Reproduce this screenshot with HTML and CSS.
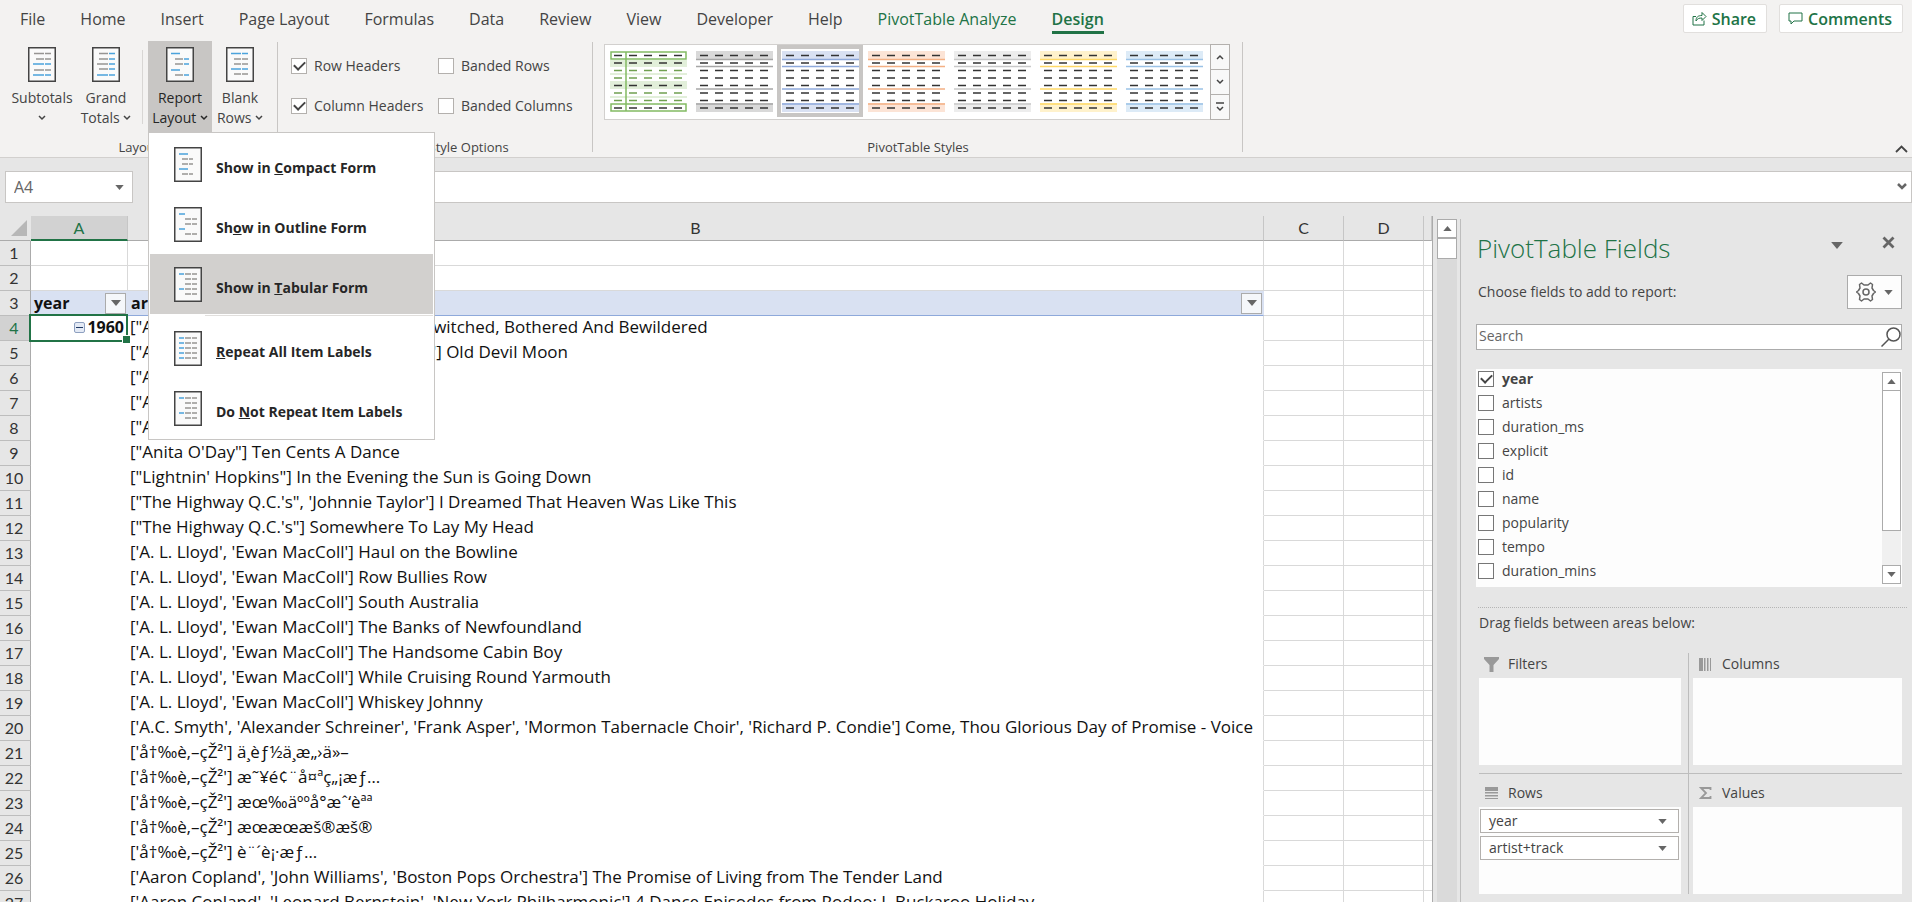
FILE: index.html
```html
<!DOCTYPE html>
<html lang="en">
<head>
  <meta charset="UTF-8">
  <meta name="viewport" content="width=device-width, initial-scale=1.0">
  <title>Excel - PivotTable Design</title>
  <link rel="stylesheet" href="styles.css">
</head>
<body>
  <!-- shared shapes -->
  <svg class="defs" width="0" height="0" aria-hidden="true">
    <symbol id="caret" viewBox="0 0 8 6"><path d="M1 1l3 3 3-3" fill="none" stroke="currentColor" stroke-width="1.5"/></symbol>
    <symbol id="down" viewBox="0 0 10 6"><path d="M0 0h10l-5 6z" fill="currentColor"/></symbol>
    <symbol id="up" viewBox="0 0 10 6"><path d="M0 6h10l-5-6z" fill="currentColor"/></symbol>
    <symbol id="style" viewBox="0 0 77 61">
      <path class="tint" d="M0 0h77v9H0zM0 52h77v9H0z"/>
      <path class="rule" d="M0 8.500h77M0 15.500h77M0 38h77M0 53h77"/>
      <path class="dash" d="M4 4.500h70M4 12h70M4 19.500h70M4 27h70M4 34.500h70M4 42h70M4 49.500h70M4 57h70"/>
    </symbol>
  </svg>

  <header class="ribbon">
    <nav class="tabs">
      <a href="#">File</a>
      <a href="#">Home</a>
      <a href="#">Insert</a>
      <a href="#">Page Layout</a>
      <a href="#">Formulas</a>
      <a href="#">Data</a>
      <a href="#">Review</a>
      <a href="#">View</a>
      <a href="#">Developer</a>
      <a href="#">Help</a>
      <a href="#" class="green">PivotTable Analyze</a>
      <a href="#" class="green active">Design</a>
      <div class="actions">
        <button type="button">
          <svg width="15" height="15" viewBox="0 0 15 15" fill="none" stroke="currentColor"><path d="M4 5.500H1v8.500h11V9.500M4 10c0-4 2-5.500 6-5.500V1.500l4 4-4 4v-2.500c-3 0-4.500.5-6 3z"/></svg>
          Share
        </button>
        <button type="button">
          <svg width="15" height="15" viewBox="0 0 15 15" fill="none" stroke="currentColor"><path d="M1 2h13v8H6l-3 3v-3H1z"/></svg>
          Comments
        </button>
      </div>
    </nav>

    <div class="groups">
      <section class="group layout">
        <div class="body">
          <button type="button" class="big subtotals">
            <svg class="sheet" viewBox="0 0 28 35"><rect x=".75" y=".75" width="26.500" height="33.500"/><path class="g" d="M6 6.500h10M17 6.500h6M8 12h8M17 12h6M6 23h10M17 23h6"/><path class="b" d="M5 17h11M17 17h6M5 28h11M17 28h6"/></svg>
            <span>Subtotals</span>
            <span><svg class="caret"><use href="#caret"/></svg></span>
          </button>
          <button type="button" class="big grand">
            <svg class="sheet" viewBox="0 0 28 35"><rect x=".75" y=".75" width="26.500" height="33.500"/><path class="g" d="M7 6.500h9M7 12h9M5 17h11M7 22h9"/><path class="b" d="M17 6.500h6M17 12h6M17 17h6M17 22h6M5 28h11M17 28h6"/></svg>
            <span>Grand</span>
            <span>Totals <svg class="caret"><use href="#caret"/></svg></span>
          </button>
          <i class="line"></i>
          <div class="dropdown">
            <button type="button" class="big report open">
              <svg class="sheet" viewBox="0 0 28 35"><rect x=".75" y=".75" width="26.500" height="33.500"/><path class="g" d="M9 12h8M9 17h8M9 28h8"/><path class="b" d="M5 6.500h9M18 12h5M18 17h5M5 23h9M18 28h5"/></svg>
              <span>Report</span>
              <span>Layout <svg class="caret"><use href="#caret"/></svg></span>
            </button>
            <div class="menu">
              <button type="button">
                <svg class="sheet" viewBox="0 0 28 35"><rect x=".75" y=".75" width="26.500" height="33.500"/><path class="g" d="M8 12h6M15 12h4M8 17h6M15 17h4M8 27h6M15 27h4"/><path class="b" d="M5 7h9M5 22h9"/></svg>
                <span>Show in <u>C</u>ompact Form</span>
              </button>
              <button type="button">
                <svg class="sheet" viewBox="0 0 28 35"><rect x=".75" y=".75" width="26.500" height="33.500"/><path class="g" d="M11 12h6M18 12h5M11 17h6M18 17h5M11 27h6M18 27h5"/><path class="b" d="M5 7h6M5 22h6"/></svg>
                <span>Sh<u>o</u>w in Outline Form</span>
              </button>
              <button type="button" class="hover">
                <svg class="sheet" viewBox="0 0 28 35"><rect x=".75" y=".75" width="26.500" height="33.500"/><path class="g" d="M11 7h6M18 7h5M11 12h6M18 12h5M11 17h6M18 17h5M11 22h6M18 22h5M11 27h6M18 27h5"/><path class="b" d="M5 7h5M5 22h5"/></svg>
                <span>Show in <u>T</u>abular Form</span>
              </button>
              <hr>
              <button type="button">
                <svg class="sheet" viewBox="0 0 28 35"><rect x=".75" y=".75" width="26.500" height="33.500"/><path class="g" d="M11 7h6M18 7h5M11 12h6M18 12h5M11 17h6M18 17h5M11 22h6M18 22h5M11 27h6M18 27h5"/><path class="b" d="M5 7h5M5 12h5M5 17h5M5 22h5M5 27h5"/></svg>
                <span><u>R</u>epeat All Item Labels</span>
              </button>
              <button type="button">
                <svg class="sheet" viewBox="0 0 28 35"><rect x=".75" y=".75" width="26.500" height="33.500"/><path class="g" d="M11 7h6M18 7h5M11 12h6M18 12h5M11 17h6M18 17h5M11 22h6M18 22h5M11 27h6M18 27h5"/><path class="b" d="M5 7h5M5 22h5"/></svg>
                <span>Do <u>N</u>ot Repeat Item Labels</span>
              </button>
            </div>
          </div>
          <button type="button" class="big blank">
            <svg class="sheet" viewBox="0 0 28 35"><rect x=".75" y=".75" width="26.500" height="33.500"/><path class="g" d="M8 12h7M16 12h6M8 17h7M16 17h6M8 27h7M16 27h6"/><path class="b" d="M5 6.500h10M16 6.500h6M5 22h10M16 22h6"/></svg>
            <span>Blank</span>
            <span>Rows <svg class="caret"><use href="#caret"/></svg></span>
          </button>
        </div>
        <h2>Layout</h2>
      </section>

      <section class="group options">
        <div class="body checks">
          <label><input type="checkbox" checked> Row Headers</label>
          <label><input type="checkbox"> Banded Rows</label>
          <label><input type="checkbox" checked> Column Headers</label>
          <label><input type="checkbox"> Banded Columns</label>
        </div>
        <h2>PivotTable Style Options</h2>
      </section>

      <section class="group styles">
        <div class="body">
          <div class="gallery">
            <button type="button" aria-label="Light green">
              <svg width="77" height="61" viewBox="0 0 77 61">
                <path fill="#e2efda" d="M0 9h77v7H0zM0 30h77v8H0zM0 22h77v2H0zM0 45h77v2H0z"/>
                <path fill="none" stroke="#83bb63" stroke-width="1.500" d="M1 1h75v7H1zM1 53h75v7H1zM16 1v59"/>
                <path class="dash" d="M4 4.500h70M4 12h70M4 34.500h70M4 57h70"/>
                <path class="dash leaf" d="M4 19.500h70M4 27h70M4 42h70M4 49.500h70"/>
              </svg>
            </button>
            <button type="button" class="gray" aria-label="Light gray"><svg width="77" height="61"><use href="#style"/></svg></button>
            <button type="button" class="blue selected" aria-label="Light blue"><svg width="77" height="61"><use href="#style"/></svg></button>
            <button type="button" class="orange" aria-label="Light orange"><svg width="77" height="61"><use href="#style"/></svg></button>
            <button type="button" class="silver" aria-label="Light silver"><svg width="77" height="61"><use href="#style"/></svg></button>
            <button type="button" class="gold" aria-label="Light gold"><svg width="77" height="61"><use href="#style"/></svg></button>
            <button type="button" class="sky" aria-label="Light sky"><svg width="77" height="61"><use href="#style"/></svg></button>
            <div class="scroll">
              <button type="button" aria-label="Previous styles"><svg class="caret flip"><use href="#caret"/></svg></button>
              <button type="button" aria-label="Next styles"><svg class="caret"><use href="#caret"/></svg></button>
              <button type="button" aria-label="More styles"><svg width="8" height="10" viewBox="0 0 8 10"><path d="M0 1h8M1 5l3 3 3-3" fill="none" stroke="currentColor" stroke-width="1.500"/></svg></button>
            </div>
          </div>
        </div>
        <h2>PivotTable Styles</h2>
      </section>

      <button type="button" class="collapse" aria-label="Collapse ribbon"><svg width="13" height="8" viewBox="0 0 13 8"><path d="M1 7l5.500-5.500L12 7" fill="none" stroke="currentColor" stroke-width="1.800"/></svg></button>
    </div>
  </header>

  <div class="formula">
    <div class="namebox">
      <input type="text" value="A4" aria-label="Name box">
      <svg width="9" height="5"><use href="#down"/></svg>
    </div>
    <div class="fx">
      <input type="text" aria-label="Formula bar">
      <svg width="10" height="8" viewBox="0 0 10 8"><path d="M1 1l4 4 4-4" fill="none" stroke="currentColor" stroke-width="2.500"/></svg>
    </div>
  </div>

  <main>
    <div class="grid">
      <table>
        <colgroup><col class="c-num"><col class="c-a"><col><col class="c-c"><col class="c-c"><col class="c-e"></colgroup>
        <thead>
          <tr><th><svg width="16" height="16" viewBox="0 0 16 16"><path d="M16 0v16H0z" fill="#b7b7b7"/></svg></th><th class="on">A</th><th>B</th><th>C</th><th>D</th><th></th></tr>
        </thead>
        <tbody>
          <tr class="lined"><th>1</th><td></td><td></td><td></td><td></td><td></td></tr>
          <tr class="lined"><th>2</th><td></td><td></td><td></td><td></td><td></td></tr>
          <tr class="head"><th>3</th>
            <td><div class="field">year <button type="button" aria-label="Filter year"><svg width="10" height="6"><use href="#down"/></svg></button></div></td>
            <td><div class="field">artist+track <button type="button" aria-label="Filter artist+track"><svg width="10" height="6"><use href="#down"/></svg></button></div></td>
            <td></td><td></td><td></td></tr>
          <tr><th class="on">4</th><td class="cursor"><button type="button" class="minus" aria-label="Collapse 1960"></button>1960</td><td>["Anita O'Day", 'Billy May Big Band'] Bewitched, Bothered And Bewildered</td><td></td><td></td><td></td></tr>
          <tr><th>5</th><td></td><td>["Anita O'Day", 'The Three Sounds Trio'] Old Devil Moon</td><td></td><td></td><td></td></tr>
          <tr><th>6</th><td></td><td>["Anita O'Day"] Angel Eyes</td><td></td><td></td><td></td></tr>
          <tr><th>7</th><td></td><td>["Anita O'Day"] I Can't Get Started</td><td></td><td></td><td></td></tr>
          <tr><th>8</th><td></td><td>["Anita O'Day"] Johnny One Note</td><td></td><td></td><td></td></tr>
          <tr><th>9</th><td></td><td>["Anita O'Day"] Ten Cents A Dance</td><td></td><td></td><td></td></tr>
          <tr><th>10</th><td></td><td>["Lightnin' Hopkins"] In the Evening the Sun is Going Down</td><td></td><td></td><td></td></tr>
          <tr><th>11</th><td></td><td>["The Highway Q.C.'s", 'Johnnie Taylor'] I Dreamed That Heaven Was Like This</td><td></td><td></td><td></td></tr>
          <tr><th>12</th><td></td><td>["The Highway Q.C.'s"] Somewhere To Lay My Head</td><td></td><td></td><td></td></tr>
          <tr><th>13</th><td></td><td>['A. L. Lloyd', 'Ewan MacColl'] Haul on the Bowline</td><td></td><td></td><td></td></tr>
          <tr><th>14</th><td></td><td>['A. L. Lloyd', 'Ewan MacColl'] Row Bullies Row</td><td></td><td></td><td></td></tr>
          <tr><th>15</th><td></td><td>['A. L. Lloyd', 'Ewan MacColl'] South Australia</td><td></td><td></td><td></td></tr>
          <tr><th>16</th><td></td><td>['A. L. Lloyd', 'Ewan MacColl'] The Banks of Newfoundland</td><td></td><td></td><td></td></tr>
          <tr><th>17</th><td></td><td>['A. L. Lloyd', 'Ewan MacColl'] The Handsome Cabin Boy</td><td></td><td></td><td></td></tr>
          <tr><th>18</th><td></td><td>['A. L. Lloyd', 'Ewan MacColl'] While Cruising Round Yarmouth</td><td></td><td></td><td></td></tr>
          <tr><th>19</th><td></td><td>['A. L. Lloyd', 'Ewan MacColl'] Whiskey Johnny</td><td></td><td></td><td></td></tr>
          <tr><th>20</th><td></td><td>['A.C. Smyth', 'Alexander Schreiner', 'Frank Asper', 'Mormon Tabernacle Choir', 'Richard P. Condie'] Come, Thou Glorious Day of Promise - Voice</td><td></td><td></td><td></td></tr>
          <tr><th>21</th><td></td><td>['å†‰è‚–çŽ²'] ä¸èƒ½ä¸æ„›ä»–</td><td></td><td></td><td></td></tr>
          <tr><th>22</th><td></td><td>['å†‰è‚–çŽ²'] æ˜¥é¢¨å¤ªç„¡æƒ…</td><td></td><td></td><td></td></tr>
          <tr><th>23</th><td></td><td>['å†‰è‚–çŽ²'] æœ‰äººå°æˆ‘èªª</td><td></td><td></td><td></td></tr>
          <tr><th>24</th><td></td><td>['å†‰è‚–çŽ²'] æœæœæš®æš®</td><td></td><td></td><td></td></tr>
          <tr><th>25</th><td></td><td>['å†‰è‚–çŽ²'] è¨´è¡·æƒ…</td><td></td><td></td><td></td></tr>
          <tr><th>26</th><td></td><td>['Aaron Copland', 'John Williams', 'Boston Pops Orchestra'] The Promise of Living from The Tender Land</td><td></td><td></td><td></td></tr>
          <tr><th>27</th><td></td><td>['Aaron Copland', 'Leonard Bernstein', 'New York Philharmonic'] 4 Dance Episodes from Rodeo: I. Buckaroo Holiday</td><td></td><td></td><td></td></tr>
        </tbody>
      </table>
    </div>

    <div class="vbar">
      <button type="button" aria-label="Scroll up"><svg width="9" height="5"><use href="#up"/></svg></button>
      <div class="thumb"></div>
    </div>

    <aside class="pane">
      <div class="title">
        <h1>PivotTable Fields</h1>
        <button type="button" aria-label="Pane options"><svg width="12" height="7"><use href="#down"/></svg></button>
        <button type="button" aria-label="Close pane"><svg width="13" height="13" viewBox="0 0 13 13"><path d="M1.500 1.500l10 10M11.500 1.500l-10 10" stroke="currentColor" stroke-width="2.800"/></svg></button>
      </div>
      <div class="choose">
        <p>Choose fields to add to report:</p>
        <button type="button" class="gear" aria-label="Tools">
          <svg width="20" height="20" viewBox="0 0 20 20" fill="none" stroke="currentColor" stroke-width="1.500" stroke-linejoin="round"><circle cx="10" cy="10" r="3"/><path d="M5.500 1l2.500 2h4l2.500-2 2 1.500-.5 3.500 1.500 2.500 2 1.500-2 1.500-1.500 2.500.5 3.500-2 1.500-2.500-2H8l-2.500 2-2-1.500.5-3.500-1.500-2.500-2-1.500 2-1.500L4 6l-.5-3.500z"/></svg>
          <svg width="9" height="5"><use href="#down"/></svg>
        </button>
      </div>
      <div class="search">
        <input type="text" placeholder="Search" aria-label="Search">
        <svg width="20" height="20" viewBox="0 0 20 20" fill="none" stroke="#555" stroke-width="1.500"><circle cx="12.500" cy="7.500" r="6.500"/><path d="M8 12l-7.500 7.500"/></svg>
      </div>
      <div class="fields">
        <div class="list">
          <label class="checked"><input type="checkbox" checked> year</label>
          <label><input type="checkbox"> artists</label>
          <label><input type="checkbox"> duration_ms</label>
          <label><input type="checkbox"> explicit</label>
          <label><input type="checkbox"> id</label>
          <label><input type="checkbox"> name</label>
          <label><input type="checkbox"> popularity</label>
          <label><input type="checkbox"> tempo</label>
          <label><input type="checkbox"> duration_mins</label>
          <label><input type="checkbox" aria-label="More fields"></label>
        </div>
        <div class="fieldbar">
          <button type="button" aria-label="Scroll fields up"><svg width="9" height="5"><use href="#up"/></svg></button>
          <div class="thumb"></div>
          <button type="button" aria-label="Scroll fields down"><svg width="9" height="5"><use href="#down"/></svg></button>
        </div>
      </div>
      <p class="drag">Drag fields between areas below:</p>
      <div class="areas">
        <section>
          <h3><svg width="15" height="15" viewBox="0 0 15 15"><path d="M0 0h15v2L9.500 8v7h-4V8L0 2z" fill="#999"/></svg>Filters</h3>
          <div class="box"></div>
        </section>
        <section>
          <h3><svg width="15" height="15" viewBox="0 0 15 15"><path d="M1 1h4v13H1zM6 1h1.500v13H6zM9 1h1.500v13H9zM12 1h1v13h-1z" fill="#999"/></svg>Columns</h3>
          <div class="box"></div>
        </section>
        <section>
          <h3><svg width="15" height="15" viewBox="0 0 15 15"><path d="M1 1h13v4H1zM1 6h13v1.500H1zM1 9h13v1.500H1zM1 12h13v1H1z" fill="#999"/></svg>Rows</h3>
          <div class="box">
            <button type="button">year <svg width="9" height="5"><use href="#down"/></svg></button>
            <button type="button">artist+track <svg width="9" height="5"><use href="#down"/></svg></button>
          </div>
        </section>
        <section>
          <h3><svg width="15" height="15" viewBox="0 0 15 15"><path d="M12.500 4V2H3l5 5-5 5h9.500v-2" fill="none" stroke="#999" stroke-width="1.800"/></svg>Values</h3>
          <div class="box"></div>
        </section>
      </div>
    </aside>
  </main>
</body>
</html>
```

FILE: styles.css
```css
* {
  box-sizing: border-box;
}

body {
  margin: 0;
  height: 100vh;
  display: flex;
  flex-direction: column;
  overflow: hidden;
  background-color: #e6e6e6;
  font-family: "Open Sans", "Noto Sans", sans-serif;
  font-size: 14px;
  line-height: 20px;
  color: #444;
}

button, input {
  font: inherit;
  color: inherit;
}

button {
  border: none;
  padding: 0;
  background: none;
  cursor: pointer;
}

h1, h2, h3, p {
  margin: 0;
  font-weight: 400;
}

svg {
  flex: none;
}

.defs {
  position: absolute;
}

/* ribbon */
.ribbon {
  background-color: #f3f2f1;
  border-bottom: 1px solid #d2d0ce;
}

.tabs {
  display: flex;
  align-items: flex-start;
  gap: 35px;
  height: 41px;
  padding: 4px 9px 0 20px;
  font-size: 16px;
}

.tabs a {
  height: 30px;
  color: #444;
  text-decoration: none;
  line-height: 30px;
  white-space: nowrap;
}

.tabs a.green {
  color: #217346;
}

.tabs a.active {
  font-weight: 600;
  border-bottom: 3px solid #217346;
}

.actions {
  display: flex;
  gap: 12px;
  margin-left: auto;
}

.actions button {
  display: flex;
  align-items: center;
  gap: 5px;
  height: 29px;
  padding: 0 10px 0 8px;
  background-color: #fff;
  border: 1px solid #e1dfdd;
  border-radius: 2px;
  color: #217346;
  font-weight: 600;
}

.groups {
  display: flex;
  height: 116px;
}

.group {
  display: flex;
  flex-direction: column;
  position: relative;
}

.group::after {
  content: "";
  position: absolute;
  right: 0;
  top: 1px;
  bottom: 5px;
  border-right: 1px solid #c8c6c4;
}

.group .body {
  display: flex;
  height: 91px;
}

.group h2 {
  font-size: 13px;
  line-height: 18px;
  padding-top: 6px;
  text-align: center;
}

.layout {
  width: 278px;
}

.layout .body {
  padding-left: 8px;
}

.options {
  width: 315px;
}

.styles {
  width: 650px;
}

.big {
  display: flex;
  flex-direction: column;
  align-items: center;
  height: 91px;
  padding-top: 6px;
  white-space: nowrap;
}

.big .sheet {
  margin-bottom: 6px;
}

.subtotals {
  width: 68px;
}

.grand {
  width: 60px;
}

.report {
  width: 64px;
}

.blank {
  width: 56px;
}

.big.open {
  background-color: #c8c6c4;
  color: #262626;
}

.line {
  width: 1px;
  height: 74px;
  margin: 9px 5px 0 6px;
  background-color: #d8d6d4;
}

.caret {
  width: 8px;
  height: 6px;
  vertical-align: 2px;
}

.flip {
  transform: rotate(180deg);
}

.sheet {
  width: 28px;
  height: 35px;
  fill: none;
  stroke-width: 1.5;
}

.sheet rect {
  fill: #fafafa;
  stroke: #444;
}

.sheet .g {
  stroke: #979593;
}

.sheet .b {
  stroke: #4ba3dc;
}

.dropdown {
  position: relative;
}

.menu {
  position: absolute;
  z-index: 5;
  top: 91px;
  left: 0;
  width: 287px;
  padding: 1px;
  background-color: #fff;
  border: 1px solid #c8c6c4;
}

.menu button {
  display: flex;
  align-items: center;
  gap: 14px;
  width: 100%;
  height: 60px;
  padding-left: 24px;
  color: #262626;
  font-weight: 700;
  white-space: nowrap;
}

.menu button span {
  padding-top: 8px;
}

.menu .hover {
  background-color: #d2d0ce;
}

.menu hr {
  margin: 1px 0 2px 55px;
  border: none;
  border-top: 1px solid #e1dfdd;
}

.group .checks {
  display: grid;
  grid-template-columns: 147px 1fr;
  grid-auto-rows: 40px;
  padding: 5px 0 0 13px;
}

.checks label {
  display: flex;
  align-items: center;
  gap: 7px;
  white-space: nowrap;
}

input[type="checkbox"] {
  appearance: none;
  flex: none;
  display: grid;
  place-items: center;
  width: 16px;
  height: 16px;
  margin: 0;
  background-color: #fff;
  border: 1px solid #b3b0ad;
}

input[type="checkbox"]:checked::after {
  content: "";
  width: 9px;
  height: 5px;
  margin-bottom: 3px;
  border: solid #444;
  border-width: 0 0 2px 2px;
  transform: rotate(-45deg);
}

.gallery {
  display: flex;
  height: 76px;
  margin: 3px 0 0 11px;
  background-color: #fff;
  border: 1px solid #d2d0ce;
}

.gallery > button {
  display: flex;
  align-items: center;
  justify-content: center;
  width: 86px;
  height: 72px;
  border: 4px solid #fff;
}

.gallery > .selected {
  border-color: #c8c6c4;
}

.tint {
  fill: var(--tint);
}

.rule {
  stroke: var(--rule);
  stroke-width: 1.5;
}

.dash {
  stroke: #333;
  stroke-width: 1.5;
  stroke-dasharray: 8 7;
}

.dash.leaf {
  stroke: #70a050;
}

.gray { --tint: #d9d9d9; --rule: #a6a6a6; }
.blue { --tint: #d9e1f2; --rule: #8ea9db; }
.orange { --tint: #fce4d6; --rule: #f4b084; }
.silver { --tint: #ededed; --rule: #c9c9c9; }
.gold { --tint: #fff2cc; --rule: #ffd966; }
.sky { --tint: #ddebf7; --rule: #9bc2e6; }

.scroll {
  display: flex;
  flex-direction: column;
  width: 20px;
  margin: -1px -1px -1px 3px;
}

.scroll button {
  display: flex;
  align-items: center;
  justify-content: center;
  flex: 1;
  border: 1px solid #b3b0ad;
  background-color: #f8f8f8;
}

.scroll button + button {
  border-top: none;
}

.collapse {
  margin: auto 4px 4px auto;
  line-height: 8px;
}

/* name box and formula bar */
.formula {
  display: flex;
  gap: 60px;
  padding: 13px 0 13px 5px;
}

.namebox, .fx {
  display: flex;
  align-items: center;
  height: 32px;
  background-color: #fff;
  border: 1px solid #c8c6c4;
  color: #666;
}

.namebox {
  width: 128px;
  padding: 0 8px;
  font-size: 16px;
}

.fx {
  flex: 1;
  padding: 0 4px;
}

.formula input {
  flex: 1;
  min-width: 0;
  padding: 0;
  border: none;
  outline: none;
  background: none;
}

main {
  flex: 1;
  min-height: 0;
  display: flex;
}

/* worksheet */
.grid {
  flex: 1;
  min-width: 0;
  overflow: hidden;
  background-color: #fff;
  border-right: 1px solid #ababab;
}

table {
  width: 100%;
  table-layout: fixed;
  border-collapse: separate;
  border-spacing: 0;
  font-size: 17px;
  line-height: 22px;
  color: #111;
}

.c-num { width: 31px; }
.c-a { width: 97px; }
.c-c { width: 80px; }
.c-e { width: 8px; }

tr {
  height: 25px;
}

th {
  padding: 0 0 1px;
  font-family: Lato, sans-serif;
  font-size: 16px;
  font-weight: 400;
  color: #333;
  background-color: #e6e6e6;
  border-right: 1px solid #ababab;
  border-bottom: 1px solid #bdbdbd;
}

thead th {
  border-bottom-color: #ababab;
  border-right-color: #c6c6c6;
}

thead th:first-child {
  border-right-color: #e6e6e6;
  line-height: 12px;
  text-align: right;
  padding-right: 3px;
}

tbody th {
  padding-right: 2px;
}

th.on {
  background-color: #d2d2d2;
  color: #217346;
}

thead th.on {
  padding: 0;
  border-bottom: 2px solid #217346;
}

td {
  padding: 0 3px 2px 2px;
  white-space: nowrap;
  border-right: 1px solid #d9d9d9;
  border-bottom: 1px solid #d9d9d9;
}

tr:not(.lined) td:nth-child(-n+3) {
  border-bottom-color: transparent;
}

tr:not(.lined) td:nth-child(2) {
  border-right-color: transparent;
}

td:last-child {
  border-right: none;
}

tr.head td:nth-child(-n+3) {
  padding: 0 1px 0 3px;
  background-color: #d9e1f2;
  border-color: #8ea9db;
  border-right-color: #d9e1f2;
  font-size: 16px;
  font-weight: 700;
}

.field {
  display: flex;
  align-items: center;
  justify-content: space-between;
}

.field button {
  display: flex;
  align-items: center;
  justify-content: center;
  width: 21px;
  height: 21px;
  border: 1px solid #ababab;
  background-color: #f5f7fa;
  color: #666;
}

td.cursor {
  position: relative;
  text-align: right;
  font-size: 16px;
  font-weight: 700;
}

/* selection frame and its fill handle */
.cursor::before {
  content: "";
  position: absolute;
  inset: -2px -1px -2px -2px;
  border: 2px solid #217346;
}

.cursor::after {
  content: "";
  position: absolute;
  right: -3px;
  bottom: -3px;
  width: 7px;
  height: 7px;
  background-color: #217346;
  border: solid #fff;
  border-width: 1px 0 0 1px;
}

.minus {
  width: 11px;
  height: 11px;
  margin-right: 2px;
  vertical-align: 1px;
  border: 1px solid #8ea0c0;
  border-radius: 2px;
  background: linear-gradient(#1f3864, #1f3864) center / 7px 1px no-repeat #e4eaf5;
}

.vbar {
  width: 20px;
  margin: 3px 3px 0 4px;
  background-color: #dadada;
}

.vbar button, .fieldbar button {
  display: flex;
  align-items: center;
  justify-content: center;
  width: 100%;
  height: 19px;
  background-color: #fff;
  border: 1px solid #ababab;
  color: #666;
}

.vbar .thumb, .fieldbar .thumb {
  height: 21px;
  background-color: #fff;
  border: 1px solid #ababab;
}

/* field list pane */
.pane {
  width: 452px;
  margin-top: 3px;
  padding: 9px 10px 0 15px;
  border-left: 1px solid #bdbdbd;
}

.title {
  display: flex;
  align-items: flex-start;
  color: #666;
}

.title h1 {
  flex: 1;
  font-size: 26px;
  font-weight: 300;
  line-height: 40px;
  padding-left: 1px;
  color: #217346;
}

.title button {
  height: 32px;
  margin: 0 7px 0 38px;
}

.title button + button {
  margin-left: 32px;
}

.choose {
  display: flex;
  align-items: center;
  justify-content: space-between;
  margin-top: 7px;
  padding-left: 2px;
}

.gear {
  display: flex;
  align-items: center;
  justify-content: center;
  gap: 8px;
  width: 55px;
  height: 34px;
  background-color: #fdfdfd;
  border: 1px solid #ababab;
  color: #666;
}

.search {
  display: flex;
  align-items: center;
  height: 26px;
  margin-top: 15px;
  background-color: #fff;
  border: 1px solid #ababab;
}

.search input {
  flex: 1;
  min-width: 0;
  padding: 0 2px 2px;
  border: none;
  outline: none;
}

.search input::placeholder {
  color: #666;
}

.fields {
  display: flex;
  height: 218px;
  margin-top: 19px;
  background-color: #fdfdfd;
  overflow: hidden;
}

.list {
  flex: 1;
  margin-top: -2px;
  padding: 0 3px 0 2px;
}

.list label {
  display: flex;
  align-items: center;
  gap: 8px;
  height: 24px;
}

.list input[type="checkbox"] {
  border-color: #767676;
}

.list .checked {
  font-weight: 700;
}

.fieldbar {
  display: flex;
  flex-direction: column;
  width: 19px;
  margin: 3px 1px 3px 0;
  background-color: #f0f0f0;
}

.fieldbar .thumb {
  height: 140px;
  margin-bottom: auto;
  border-top: none;
}

.drag {
  margin: 20px -5px 0 2px;
  padding: 5px 0 1px 1px;
  border-top: 1px dotted #b5b5b5;
}

.areas {
  display: grid;
  grid-template-columns: 210px 1fr;
  margin: 19px 0 0 3px;
}

.areas section:nth-child(odd) {
  padding-right: 7px;
  border-right: 1px solid #bdbdbd;
}

.areas section:nth-child(even) {
  padding-left: 4px;
}

.areas section:nth-child(-n+2) {
  padding-bottom: 8px;
  border-bottom: 1px solid #bdbdbd;
}

.areas section:nth-child(n+3) {
  padding-top: 8px;
}

.areas h3 {
  display: flex;
  align-items: center;
  gap: 9px;
  font-size: 14px;
  height: 25px;
  padding: 0 0 3px 5px;
}

.box {
  display: flex;
  flex-direction: column;
  gap: 3px;
  height: 87px;
  padding: 2px 2px 0 1px;
  background-color: #fdfdfd;
}

.box button {
  display: flex;
  align-items: center;
  justify-content: space-between;
  height: 24px;
  padding: 0 11px 0 8px;
  border: 1px solid #b3b0ad;
  background-color: #fff;
}

.box svg {
  color: #666;
}
```
